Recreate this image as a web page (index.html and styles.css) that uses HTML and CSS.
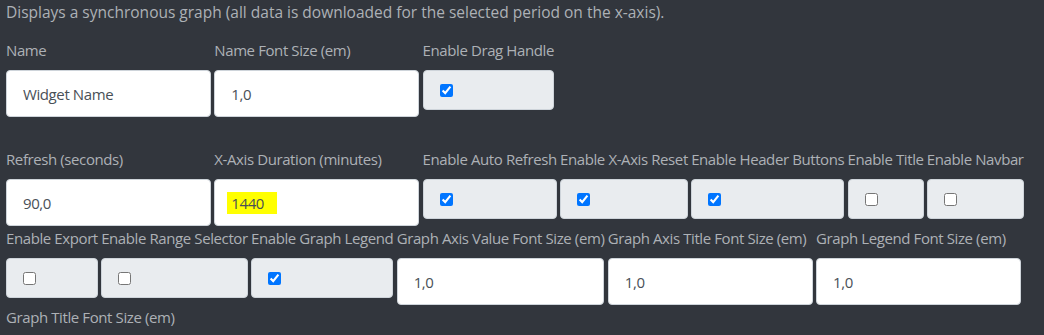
FILE: index.html
```html
<!DOCTYPE html>
<html lang="en">
<head>
<meta charset="utf-8">
<title>Synchronous graph settings</title>
<link rel="stylesheet" href="styles.css">
</head>
<body>
<p class="desc">Displays a synchronous graph (all data is downloaded for the selected period on the x-axis).</p>

<div class="row row-first">
  <div class="field field-text">
    <label class="lbl">Name</label>
    <div class="input">Widget Name</div>
  </div>
  <div class="field field-text">
    <label class="lbl">Name Font Size (em)</label>
    <div class="input">1,0</div>
  </div>
  <div class="field">
    <label class="lbl">Enable Drag Handle</label>
    <div class="check"><input type="checkbox" checked></div>
  </div>
</div>

<div class="row">
  <div class="field field-text">
    <label class="lbl">Refresh (seconds)</label>
    <div class="input">90,0</div>
  </div>
  <div class="field field-text">
    <label class="lbl">X-Axis Duration (minutes)</label>
    <div class="input"><span class="mark">1440</span></div>
  </div>
  <div class="field">
    <label class="lbl">Enable Auto Refresh</label>
    <div class="check"><input type="checkbox" checked></div>
  </div>
  <div class="field">
    <label class="lbl">Enable X-Axis Reset</label>
    <div class="check"><input type="checkbox" checked></div>
  </div>
  <div class="field">
    <label class="lbl">Enable Header Buttons</label>
    <div class="check"><input type="checkbox" checked></div>
  </div>
  <div class="field">
    <label class="lbl">Enable Title</label>
    <div class="check"><input type="checkbox"></div>
  </div>
  <div class="field">
    <label class="lbl">Enable Navbar</label>
    <div class="check"><input type="checkbox"></div>
  </div>
</div>

<div class="row">
  <div class="field">
    <label class="lbl">Enable Export</label>
    <div class="check"><input type="checkbox"></div>
  </div>
  <div class="field">
    <label class="lbl">Enable Range Selector</label>
    <div class="check"><input type="checkbox"></div>
  </div>
  <div class="field">
    <label class="lbl">Enable Graph Legend</label>
    <div class="check"><input type="checkbox" checked></div>
  </div>
  <div class="field field-text">
    <label class="lbl">Graph Axis Value Font Size (em)</label>
    <div class="input">1,0</div>
  </div>
  <div class="field field-text">
    <label class="lbl">Graph Axis Title Font Size (em)</label>
    <div class="input">1,0</div>
  </div>
  <div class="field field-text">
    <label class="lbl">Graph Legend Font Size (em)</label>
    <div class="input">1,0</div>
  </div>
</div>

<div class="row">
  <div class="field field-text">
    <label class="lbl">Graph Title Font Size (em)</label>
  </div>
</div>
</body>
</html>
```

FILE: styles.css
```css
html, body {
  margin: 0;
  background: #32363d;
}

body {
  padding: 0 6px;
  font-family: "Open Sans", "Noto Sans", sans-serif;
  font-size: 15px;
  letter-spacing: -0.4px;
  color: #adb1b6;
}

.desc {
  margin: 0 0 14px;
  line-height: 24px;
  font-size: 15.5px;
  letter-spacing: 0;
  white-space: nowrap;
}

.row {
  display: flex;
  align-items: flex-start;
  gap: 3.3px;
}

.row-first {
  margin-bottom: 30px;
}

.field {
  display: flex;
  flex-direction: column;
}

.field-text {
  min-width: 205px;
}

.lbl {
  display: block;
  line-height: 24px;
  margin-bottom: 8px;
  white-space: nowrap;
}

.input {
  box-sizing: border-box;
  height: 47px;
  display: flex;
  align-items: center;
  padding: 0 16px;
  background: #fff;
  border: 1px solid #ced4da;
  border-radius: 4px;
  color: #495057;
  font-size: 15px;
}

.mark {
  background: #ffff00;
  padding: 2px 13px 2px 4px;
  margin-left: -4px;
  line-height: 18px;
}

.check {
  box-sizing: border-box;
  height: 40px;
  display: flex;
  align-items: center;
  padding: 0 16px;
  background: #e9ecef;
  border: 1px solid #ced4da;
  border-radius: 4px;
}

.check input {
  width: 13px;
  height: 13px;
  margin: 0;
}
```
